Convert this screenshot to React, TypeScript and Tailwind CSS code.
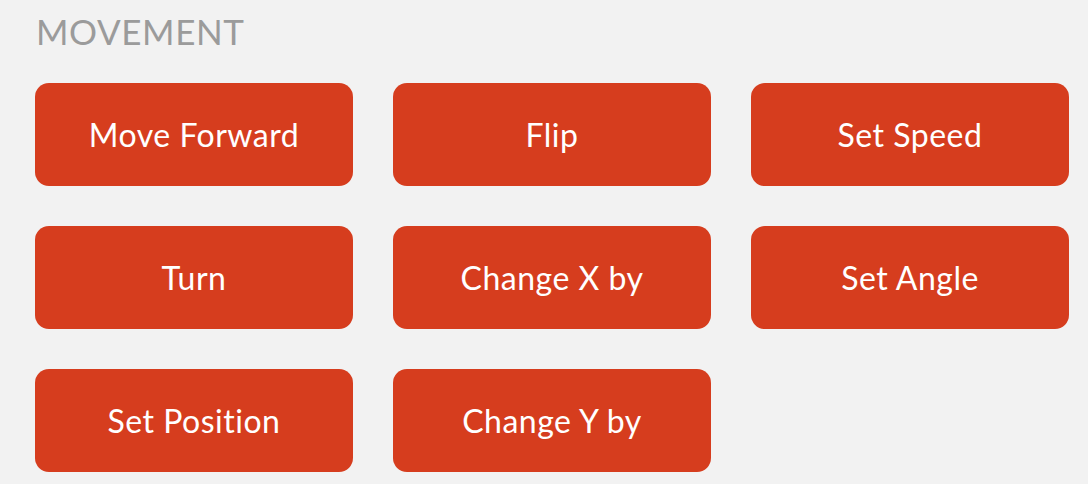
import React from 'react';

const App = () => {
  const blocks = [
    'Move Forward',
    'Flip',
    'Set Speed',
    'Turn',
    'Change X by',
    'Set Angle',
    'Set Position',
    'Change Y by',
  ];

  return (
    <div className="min-h-screen w-full bg-[#f2f2f2] font-['Lato',sans-serif]">
      <div className="pl-[35px] pt-[14px]">
        <h2 className="pl-[1px] text-[35px] leading-none text-[#9b9b9b] tracking-[0.6px]">MOVEMENT</h2>
        <div className="mt-[34px] grid grid-cols-[repeat(3,318px)] gap-x-[40px] gap-y-[40px]">
          {blocks.map((label) => (
            <button
              key={label}
              className="h-[103px] rounded-[14px] bg-[#d63d1e] text-[32px] tracking-[0.5px] text-white flex items-center justify-center"
            >
              {label}
            </button>
          ))}
        </div>
      </div>
    </div>
  );
};

export default App;
